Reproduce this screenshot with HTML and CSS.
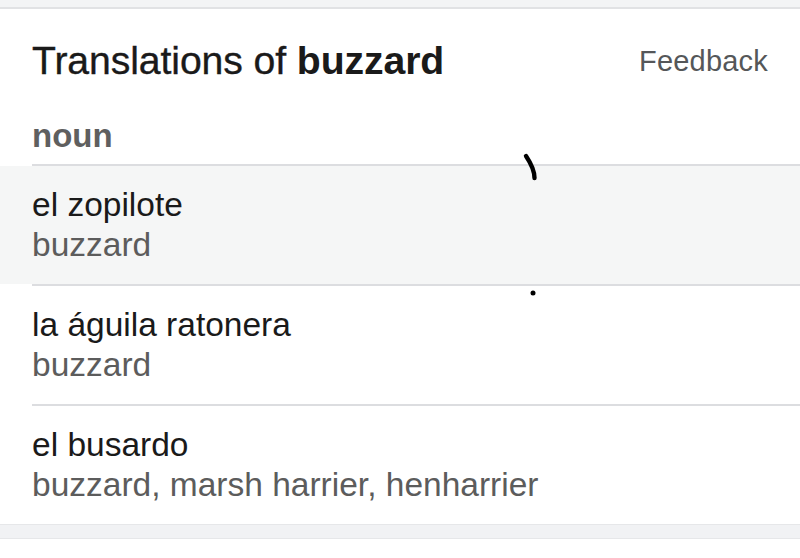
FILE: index.html
```html
<!DOCTYPE html>
<html lang="en">
<head>
<meta charset="utf-8">
<title>Translations of buzzard</title>
<link rel="stylesheet" href="styles.css">
</head>
<body>
<div class="page">
  <div class="top-band"></div>
  <section class="card">
    <header class="card-header">
      <h2 class="title">Translations of <b>buzzard</b></h2>
      <a class="feedback">Feedback</a>
    </header>
    <div class="pos">noun</div>
    <ul class="list">
      <li class="row row-active">
        <div class="row-inner">
          <div class="primary">el zopilote</div>
          <div class="secondary">buzzard</div>
        </div>
      </li>
      <li class="row">
        <div class="row-inner bordered">
          <div class="primary">la águila ratonera</div>
          <div class="secondary">buzzard</div>
        </div>
      </li>
      <li class="row">
        <div class="row-inner bordered">
          <div class="primary">el busardo</div>
          <div class="secondary">buzzard, marsh harrier, henharrier</div>
        </div>
      </li>
    </ul>
  </section>
  <div class="bottom-band"></div>
  <svg class="marks" width="800" height="558" viewBox="0 0 800 558" aria-hidden="true">
    <path d="M526 156 C530 162, 534.5 169, 534.5 178" fill="none" stroke="#000" stroke-width="4.4" stroke-linecap="round"/>
    <circle cx="533" cy="293" r="2.5" fill="#000"/>
  </svg>
</div>
</body>
</html>
```

FILE: styles.css
```css
html, body {
  margin: 0;
  padding: 0;
  background: #ffffff;
}

body {
  font-family: "Liberation Sans", Arial, Helvetica, sans-serif;
  color: #1f1f1f;
}

.page {
  position: relative;
  width: 800px;
  height: 558px;
  overflow: hidden;
}

.top-band {
  height: 7px;
  background: #f3f4f5;
  border-bottom: 2px solid #e1e2e4;
}

.card-header {
  display: flex;
  justify-content: space-between;
  align-items: flex-start;
  padding: 29px 32px 0 32px;
}

.title {
  margin: 0;
  font-size: 39.2px;
  line-height: 46px;
  font-weight: normal;
  color: #1a1a1a;
  letter-spacing: -0.1px;
  -webkit-text-stroke: 0.35px #1a1a1a;
}

.title b {
  font-weight: bold;
  -webkit-text-stroke: 0;
}

.feedback {
  font-size: 29px;
  line-height: 46px;
  color: #555759;
  letter-spacing: 0.2px;
}

.pos {
  margin-left: 32px;
  padding: 32px 0 8px 0;
  font-size: 33px;
  line-height: 40px;
  font-weight: bold;
  color: #5f5f5f;
  border-bottom: 2px solid #dcdde0;
}

.list {
  list-style: none;
  margin: 0;
  padding: 0;
}

.row-active {
  background: #f5f6f6;
}

.row-inner {
  margin-left: 32px;
  padding: 19px 0;
  font-size: 33.5px;
  line-height: 40px;
}

.row-inner.bordered {
  border-top: 2px solid #dcdde0;
}

.primary {
  color: #1a1a1a;
}

.secondary {
  color: #5c5c5c;
}

.bottom-band {
  height: 13px;
  background: #f1f2f4;
  border-top: 1px solid #e6e7e9;
  border-bottom: 1px solid #e6e7e9;
}

.marks {
  position: absolute;
  top: 0;
  left: 0;
  pointer-events: none;
}
```
